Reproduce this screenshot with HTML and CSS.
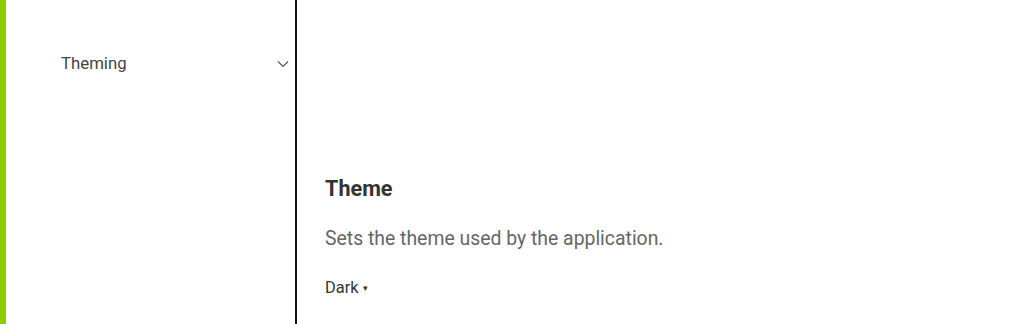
FILE: index.html
```html
<!DOCTYPE html>
<html>
<head>
  <meta charset="UTF-8">
  <title>Settings</title>
  <link rel="stylesheet" href="styles.css">
</head>
<body>
  <div class="layout">
    <aside class="sidebar">
      <div class="nav-item">
        <span class="nav-label">Theming</span>
        <svg class="chevron" width="12" height="8" viewBox="0 0 12 8">
          <path d="M1 1.5 L6 6.5 L11 1.5" fill="none" stroke="#555" stroke-width="1.2"/>
        </svg>
      </div>
    </aside>

    <main class="content">
      <section class="setting">
        <h2 class="setting-title">Theme</h2>
        <p class="setting-desc">Sets the theme used by the application.</p>
        <div class="select">Dark <span class="caret">▾</span></div>
      </section>
    </main>
  </div>
</body>
</html>
```

FILE: styles.css
```css
* {
  padding: 0;
  margin: 0;
  box-sizing: border-box;
}
body {
  font-family: Roboto, "Liberation Sans", sans-serif;
  background: white;
  height: 324px;
  overflow: hidden;
}
.layout {
  display: flex;
  height: 324px;
}
.sidebar {
  width: 297px;
  border-left: 6px solid #8fc900;
  border-right: 2px solid #111;
  padding: 52px 6px 0 55px;
}
.nav-item {
  display: flex;
  align-items: center;
  justify-content: space-between;
  height: 22px;
}
.nav-label {
  font-size: 16.8px;
  color: #444;
}
.chevron {
  margin-top: 1px;
}
.content {
  flex: 1;
  padding: 174px 0 0 28px;
}
.setting-title {
  font-size: 21.6px;
  font-weight: 700;
  color: #333;
  line-height: 30px;
}
.setting-desc {
  margin-top: 22px;
  font-size: 19.4px;
  color: #666;
  line-height: 26px;
}
.select {
  margin-top: 26px;
  font-size: 16.4px;
  color: #333;
  line-height: 20px;
}
.caret {
  font-size: 9px;
  vertical-align: 2px;
}
```
